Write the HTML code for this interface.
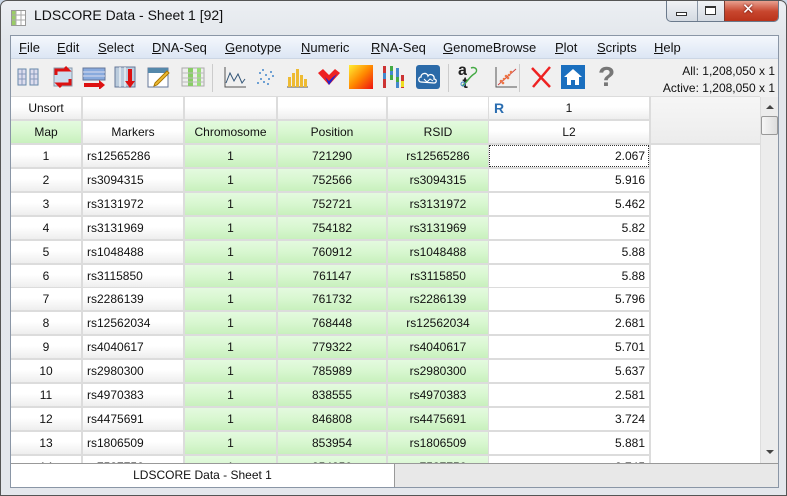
<!DOCTYPE html>
<html><head><style>
*{margin:0;padding:0;box-sizing:border-box}
body{width:787px;height:496px;overflow:hidden;background:#c9d6e6;font-family:"Liberation Sans","DejaVu Sans",sans-serif;font-size:12px;color:#111;position:relative}
.frame{position:absolute;left:0;top:0;width:787px;height:496px;border:1px solid #555;border-radius:7px 7px 0 0;background:linear-gradient(#eceff3,#e2e6eb 40px,#e4e7ec)}
.title{position:absolute;left:33px;top:6px;font-size:14px;color:#111}
.inner{position:absolute;left:9px;top:34px;width:769px;height:453px;background:#f0f0f0;border:1px solid #8a96a6}
.menu{position:absolute;left:0;top:0;width:767px;height:23px;background:linear-gradient(#f4f7fc,#dce6f4);border-bottom:1px solid #ccd6e4}
.menu span{position:absolute;top:4px;font-size:13px}
.menu u{text-decoration:underline}
.tb{position:absolute;left:0;top:24px;width:767px;height:37px;background:#f0f0f0}
.ic{position:absolute;top:5px;width:24px;height:24px}
.sep{position:absolute;top:4px;width:1px;height:28px;background:#ccc}
.cnt{position:absolute;right:3px;top:3px;text-align:right;font-size:12px;line-height:17px}
.grid{position:absolute;left:0;top:60px;width:749px;height:367px;background:#dcdcdc;overflow:hidden}
.c{position:absolute;height:22px;line-height:22px;text-align:center;background:linear-gradient(#fff,#fff 45%,#eeeeee);overflow:hidden;white-space:nowrap}
.g{background:linear-gradient(#e4fadf,#d8f7d0 50%,#c8f0bd)}
.l{text-align:left;padding-left:4px}
.r{text-align:right;padding-right:4px;background:#fff}
.hd{background:linear-gradient(#f6f6f6,#ececec)}
.sb{position:absolute;left:749px;top:61px;width:18px;height:366px;background:#ececec;border-left:1px solid #ddd}
.tabs{position:absolute;left:0;top:427px;width:767px;height:24px;background:#e8e8e8;border-top:1px solid #999}
.tab{position:absolute;left:0;top:0;width:384px;height:23px;background:#fff;border-right:1px solid #999;text-align:center;line-height:22px}
</style></head><body>
<div class="frame">
<svg style="position:absolute;left:10px;top:9px" width="15" height="16"><rect x=".5" y=".5" width="14" height="15" fill="#fff" stroke="#999"/><rect x="1" y="1" width="4" height="14" fill="#9c6"/><path d="M5 1v14M10 1v14M1 5h13M1 10h13" stroke="#aaa"/></svg>
<div class="title">LDSCORE Data - Sheet 1 [92]</div>
<div style="position:absolute;left:665px;top:0;width:113px;height:21px;border:1px solid #6b7a8c;border-top:none;border-radius:0 0 5px 5px;background:linear-gradient(#f0f2f5,#d4dae2);overflow:hidden">
<div style="position:absolute;left:30px;top:0;width:1px;height:21px;background:#8a96a6"></div>
<div style="position:absolute;left:57px;top:0;width:56px;height:21px;background:linear-gradient(#e8a08f,#c8462e 50%,#b83018);border-left:1px solid #7a3a30"></div>
<div style="position:absolute;left:9px;top:11px;width:11px;height:4px;border:1px solid #333;background:#fff"></div>
<div style="position:absolute;left:38px;top:5px;width:11px;height:9px;border:1px solid #333;border-top-width:2px;background:#fff"></div>
<div style="position:absolute;left:75px;top:-1px;color:#fff;font-weight:bold;font-size:15px;text-shadow:0 0 2px #500">✕</div>
</div>
<div class="inner">
<div class="menu">
<span style="left:8px"><u>F</u>ile</span><span style="left:46px"><u>E</u>dit</span><span style="left:87px"><u>S</u>elect</span><span style="left:141px"><u>D</u>NA-Seq</span><span style="left:214px"><u>G</u>enotype</span><span style="left:290px"><u>N</u>umeric</span><span style="left:360px"><u>R</u>NA-Seq</span><span style="left:432px"><u>G</u>enomeBrowse</span><span style="left:544px"><u>P</u>lot</span><span style="left:586px"><u>S</u>cripts</span><span style="left:643px"><u>H</u>elp</span>
</div>
<div class="tb">
<svg class="ic" style="left:5px" viewBox="0 0 24 24"><path d="M2 4h8v16H2zM14 4h8v16h-8z" fill="#dde" stroke="#68a"/><path d="M6 4v16M18 4v16M2 9h8M2 14h8M14 9h8M14 14h8" stroke="#89b"/></svg>
<svg class="ic" style="left:40px" viewBox="0 0 24 24"><rect x="3" y="3" width="18" height="18" fill="#cde" stroke="#89a"/><path d="M5 10V5h12l-3-3M19 14v5H7l3 3" stroke="#d11" stroke-width="3" fill="none"/></svg>
<svg class="ic" style="left:71px" viewBox="0 0 24 24"><rect x="1" y="3" width="22" height="12" fill="#8ad" stroke="#679"/><path d="M1 7h22M1 11h22" stroke="#dde"/><path d="M2 18h15v-3l6 5-6 5v-3H2z" fill="#d11"/></svg>
<svg class="ic" style="left:103px" viewBox="0 0 24 24"><rect x="1" y="2" width="20" height="20" fill="#bcd" stroke="#679"/><path d="M6 2v20M11 2v20" stroke="#fff"/><path d="M14 4h4v12h3l-5 7-5-7h3z" fill="#d11"/></svg>
<svg class="ic" style="left:136px" viewBox="0 0 24 24"><rect x="1" y="3" width="20" height="19" fill="#fff" stroke="#679"/><rect x="1" y="3" width="20" height="5" fill="#58a"/><path d="M8 18l12-12 2 2-12 12-3 1z" fill="#eb3" stroke="#a70"/></svg>
<svg class="ic" style="left:170px" viewBox="0 0 24 24"><rect x="1" y="3" width="22" height="18" fill="#eee" stroke="#aaa"/><rect x="7" y="3" width="5" height="18" fill="#8c6"/><rect x="16" y="3" width="4" height="18" fill="#9d7"/><path d="M1 8h22M1 13h22M1 17h22" stroke="#bbb"/></svg>
<div class="sep" style="left:201px"></div>
<svg class="ic" style="left:212px" viewBox="0 0 24 24"><path d="M2 2v20h21" stroke="#555" fill="none"/><path d="M3 18l4-10 4 8 4-7 4 9 3-4" stroke="#357" fill="none"/></svg>
<svg class="ic" style="left:242px" viewBox="0 0 24 24"><g fill="#48c"><circle cx="5" cy="18" r="1"/><circle cx="8" cy="14" r="1"/><circle cx="11" cy="17" r="1"/><circle cx="13" cy="10" r="1"/><circle cx="16" cy="14" r="1"/><circle cx="18" cy="7" r="1"/><circle cx="20" cy="11" r="1"/><circle cx="7" cy="8" r="1"/><circle cx="15" cy="19" r="1"/><circle cx="10" cy="5" r="1"/></g></svg>
<svg class="ic" style="left:274px" viewBox="0 0 24 24"><path d="M2 22h21" stroke="#555"/><g fill="#eb3"><rect x="3" y="12" width="3" height="10"/><rect x="7" y="8" width="3" height="14"/><rect x="11" y="4" width="3" height="18"/><rect x="15" y="10" width="3" height="12"/><rect x="19" y="14" width="3" height="8"/></g></svg>
<svg class="ic" style="left:306px" viewBox="0 0 24 24"><path d="M1 8l5-4 6 6 6-6 5 4-11 12z" fill="#e22"/><path d="M8 12l4 4 4-4 4 -3-8 11z" fill="#22c"/></svg>
<div class="ic" style="left:338px;background:linear-gradient(135deg,#fe3,#f80 50%,#e11)"></div>
<svg class="ic" style="left:370px" viewBox="0 0 24 24"><rect x="2" y="1" width="3" height="22" fill="#c33"/><rect x="2" y="8" width="3" height="6" fill="#48c"/><rect x="9" y="1" width="3" height="14" fill="#4a4"/><rect x="9" y="6" width="3" height="4" fill="#48c"/><rect x="15" y="3" width="3" height="20" fill="#48c"/><rect x="15" y="12" width="3" height="5" fill="#4a4"/><rect x="20" y="10" width="3" height="13" fill="#c33"/><rect x="20" y="16" width="3" height="6" fill="#ed2"/></svg>
<svg class="ic" style="left:405px" viewBox="0 0 24 24"><rect x="0" y="0" width="24" height="24" rx="3" fill="#2b6aa8"/><path d="M5 17c-3 0-3-5 0-5 0-4 6-5 7-1 2-3 7-1 6 3 3 0 3 4 0 4z" fill="none" stroke="#fff" stroke-width="1.3"/><path d="M8 14l3 3 3-3 3 2" stroke="#fff" fill="none"/></svg>
<div class="sep" style="left:437px"></div>
<div style="position:absolute;left:447px;top:4px;font-size:16px;font-weight:bold;line-height:13px;color:#222">a<br>&nbsp;t</div>
<svg style="position:absolute;left:447px;top:5px" width="24" height="26"><path d="M13 3c5-2 8 3 3 6s-8 10-12 12" stroke="#4a4" fill="none" stroke-width="1.5"/><circle cx="5" cy="19" r="2" fill="none" stroke="#48c"/></svg>
<svg class="ic" style="left:483px" viewBox="0 0 24 24"><path d="M2 2v20h21" stroke="#555" fill="none"/><path d="M4 20l18-16" stroke="#c44"/><g fill="#e74"><circle cx="7" cy="16" r="1.3"/><circle cx="10" cy="14" r="1.3"/><circle cx="12" cy="11" r="1.3"/><circle cx="15" cy="10" r="1.3"/><circle cx="17" cy="7" r="1.3"/><circle cx="9" cy="18" r="1.3"/><circle cx="14" cy="13" r="1.3"/></g></svg>
<div class="sep" style="left:508px"></div>
<svg class="ic" style="left:518px" viewBox="0 0 24 24"><path d="M3 3l18 19M21 2L4 22" stroke="#e22" stroke-width="2.5"/></svg>
<svg class="ic" style="left:550px" viewBox="0 0 24 24"><rect x="0" y="0" width="24" height="24" fill="#1a6fbf"/><path d="M3 12L12 4l9 8h-3v8h-4v-5h-4v5H6v-8z" fill="#fff"/></svg>
<div style="position:absolute;left:587px;top:1px;font-size:28px;font-weight:bold;color:#777;line-height:32px">?</div>
<div class="cnt">All: 1,208,050 x 1<br>Active: 1,208,050 x 1</div>
</div>
<div class="grid" id="g"></div>
<div class="sb">
<div style="position:absolute;left:5px;top:8px;width:0;height:0;border-left:4px solid transparent;border-right:4px solid transparent;border-bottom:4px solid #444"></div>
<div style="position:absolute;left:0;top:19px;width:17px;height:19px;border:1px solid #999;border-radius:2px;background:linear-gradient(90deg,#f6f6f6,#ddd)"></div>
<div style="position:absolute;left:5px;top:353px;width:0;height:0;border-left:4px solid transparent;border-right:4px solid transparent;border-top:4px solid #444"></div>
</div>
<div class="tabs"><div class="tab">LDSCORE Data - Sheet 1</div></div>
</div>
</div>
<script>
var cols=[[0,70],[72,100],[174,91],[267,108],[377,100],[478,160],[640,109]];
var rows=[["1","rs12565286","721290","2.067"],["2","rs3094315","752566","5.916"],["3","rs3131972","752721","5.462"],["4","rs3131969","754182","5.82"],["5","rs1048488","760912","5.88"],["6","rs3115850","761147","5.88"],["7","rs2286139","761732","5.796"],["8","rs12562034","768448","2.681"],["9","rs4040617","779322","5.701"],["10","rs2980300","785989","5.637"],["11","rs4970383","838555","2.581"],["12","rs4475691","846808","3.724"],["13","rs1806509","853954","5.881"],["14","rs7537756","854250","2.745"]];
var h="";
function cell(ci,top,txt,cls,st){var c=cols[ci];h+='<div class="c '+(cls||'')+'" style="left:'+c[0]+'px;top:'+top+'px;width:'+c[1]+'px;'+(st||'')+'">'+txt+'</div>';}
cell(0,1,"Unsort");cell(1,1,"");cell(2,1,"");cell(3,1,"");cell(4,1,"");
cell(5,1,'<b style="position:absolute;left:5px;color:#2a6db0;font-size:14px">R</b>1');
h+='<div class="c hd" style="left:640px;top:1px;width:109px;height:46px"></div>';
h+='<div style="position:absolute;left:640px;top:49px;width:109px;height:330px;background:#fff"></div>';
cell(0,25,"Map","g");cell(1,25,"Markers");cell(2,25,"Chromosome","g");cell(3,25,"Position","g");cell(4,25,"RSID","g");cell(5,25,"L2");
for(var i=0;i<rows.length;i++){var t=Math.round(49+i*23.9),r=rows[i];
cell(0,t,r[0]);cell(1,t,r[1],"l");cell(2,t,"1","g");cell(3,t,r[2],"g");cell(4,t,r[1],"g");cell(5,t,r[3],"r",i==0?"outline:1px dotted #333;outline-offset:-1px":"");}
document.getElementById("g").innerHTML=h;
</script>
</body></html>
